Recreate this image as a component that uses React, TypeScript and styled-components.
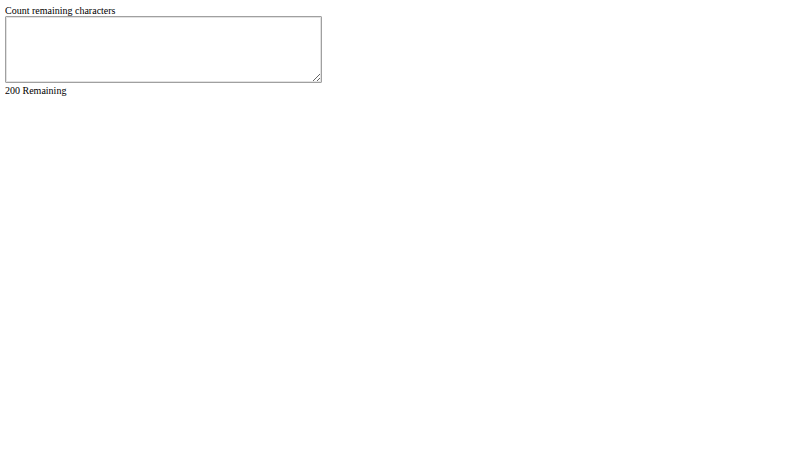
import styled, {createGlobalStyle} from 'styled-components';
import {useState} from 'react';

const GlobalStyle = createGlobalStyle`
  body {
    margin: 5px;
    font-family: "Liberation Serif", "Times New Roman", serif;
    font-size: 10px;
    background: #fff;
    color: #000;
  }
`

const MAX = 200

export default function App() {

    const [text, setText] = useState('')

    return (
        <>
            <GlobalStyle/>
            <Wrapper>
                <Label htmlFor="msg">Count remaining characters</Label>
                <TextBox id="msg" value={text} maxLength={MAX} onChange={e => setText(e.target.value)}/>
                <Counter>{MAX - text.length} Remaining</Counter>
            </Wrapper>
        </>
    );
}

const Wrapper = styled.div`
  display: flex;
  flex-direction: column;
  align-items: flex-start;
`

const Label = styled.label`
  line-height: 11px;
`

const TextBox = styled.textarea`
  box-sizing: border-box;
  width: 317px;
  height: 67px;
  margin: 0;
  border: 1px solid #a0a0a0;
  box-shadow: inset 0 0 0 1px #e2e2e2;
  border-radius: 1px;
  font-family: inherit;
  font-size: 10px;
`

const Counter = styled.span`
  line-height: 16px;
`
